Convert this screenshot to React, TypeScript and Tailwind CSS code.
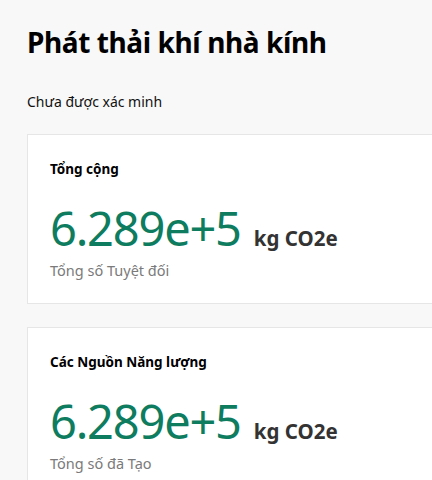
export default function App() {
  const cards = [
    { title: 'Tổng cộng', value: '6.289e+5', unit: 'kg CO2e', note: 'Tổng số Tuyệt đối' },
    { title: 'Các Nguồn Năng lượng', value: '6.289e+5', unit: 'kg CO2e', note: 'Tổng số đã Tạo' },
  ];

  return (
    <div
      className="min-h-[480px] bg-[#f8f8f8] pl-[27px] pt-[24px] overflow-hidden"
      style={{ fontFamily: '"Noto Sans", "Open Sans", sans-serif' }}
    >
      <h1 className="text-[28px] font-bold leading-[36px] text-black tracking-[-0.4px]">
        Phát thải khí nhà kính
      </h1>
      <p className="mt-[32px] text-[14px] leading-[20px] text-[#111]">Chưa được xác minh</p>

      <div className="mt-[22px] flex flex-col gap-[23px]">
        {cards.map((c) => (
          <div
            key={c.title}
            className="w-[430px] bg-white border border-[#e6e6e6] pl-[22px] pt-[24px] pb-[22px]"
          >
            <h3 className="text-[13.5px] font-bold leading-[20px] text-black">{c.title}</h3>
            <div className="mt-[20px] flex items-baseline gap-[13px]">
              <span className="text-[47px] leading-[58px] text-[#0e7c5e] tracking-[-1.2px]">{c.value}</span>
              <span className="text-[20.5px] font-bold text-[#333]">{c.unit}</span>
            </div>
            <p className="mt-[2px] text-[14.5px] leading-[22px] text-[#7a7a7a]">{c.note}</p>
          </div>
        ))}
      </div>
    </div>
  );
}
